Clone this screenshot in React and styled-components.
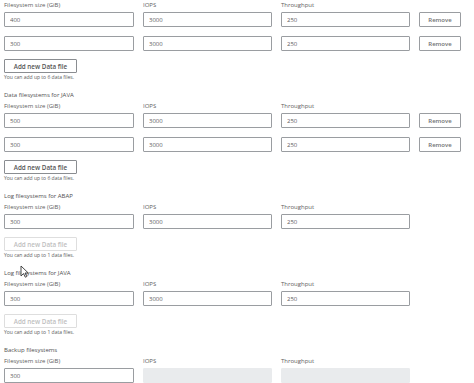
import React from 'react';
import styled, { createGlobalStyle } from 'styled-components';

const GlobalStyle = createGlobalStyle`
  body {
    margin: 0;
    background: #ffffff;
    font-family: "Open Sans", "Liberation Sans", sans-serif;
  }
`;

const Page = styled.div`
  position: relative;
  padding: 1px 0 0 4px;
  width: 474px;
  height: 383px;
  box-sizing: border-box;
  overflow: hidden;
`;

const Section = styled.section`
  display: flex;
  flex-direction: column;
  margin-bottom: 10px;
`;

const Title = styled.div`
  font-size: 6px;
  line-height: 8px;
  color: #505050;
  margin-bottom: 3px;
`;

const Columns = styled.div`
  display: grid;
  grid-template-columns: 130px 129px 129px 42px;
  column-gap: 9px;
  row-gap: 9px;
`;

const HeaderRow = styled(Columns)`
  margin-bottom: 3px;
`;

const Label = styled.div`
  font-size: 6px;
  line-height: 8px;
  color: #606060;
`;

const Field = styled.input`
  box-sizing: border-box;
  width: 100%;
  height: 15px;
  margin: 0;
  padding: 0 5px;
  font-family: "Open Sans", "Liberation Sans", sans-serif;
  font-size: 6px;
  color: #606060;
  background: ${({ disabled }) => (disabled ? '#e9ebed' : '#fff')};
  border: 1px solid ${({ disabled }) => (disabled ? '#e9ebed' : '#9a9da1')};
  border-radius: 1px;
  outline: none;
`;

const RemoveButton = styled.button`
  box-sizing: border-box;
  height: 15px;
  margin: 0;
  padding: 0;
  font-family: "Open Sans", "Liberation Sans", sans-serif;
  font-size: 6px;
  font-weight: 600;
  color: #707070;
  background: #fff;
  border: 1px solid #9a9da1;
  border-radius: 1px;
`;

const AddButton = styled.button`
  box-sizing: border-box;
  align-self: flex-start;
  width: 73px;
  height: 14px;
  margin: 8px 0 0;
  padding: 0;
  font-family: "Open Sans", "Liberation Sans", sans-serif;
  font-size: 6.3px;
  font-weight: 600;
  color: ${({ disabled }) => (disabled ? '#c0c0c0' : '#555')};
  background: #fff;
  border: 1px solid ${({ disabled }) => (disabled ? '#dedede' : '#8a8d91')};
  border-radius: 1px;
`;

const Helper = styled.div`
  font-size: 5px;
  line-height: 8px;
  color: #5a5a5a;
`;

const Cursor = styled.svg`
  position: absolute;
  left: 20px;
  top: 265px;
`;

const sections = [
  { title: null, rows: [['400', '3000', '250'], ['300', '3000', '250']], remove: true, limit: 6 },
  { title: 'Data filesystems for JAVA', rows: [['500', '3000', '250'], ['300', '3000', '250']], remove: true, limit: 6 },
  { title: 'Log filesystems for ABAP', rows: [['300', '3000', '250']], limit: 1, disabledAdd: true },
  { title: 'Log filesystems for JAVA', rows: [['300', '3000', '250']], limit: 1, disabledAdd: true },
  { title: 'Backup filesystems', rows: [['300', null, null]], noAdd: true },
];

const FsSection = ({ title, rows, remove, limit, disabledAdd, noAdd }) => (
  <Section>
    {title && <Title>{title}</Title>}
    <HeaderRow>
      <Label>Filesystem size (GiB)</Label>
      <Label>IOPS</Label>
      <Label>Throughput</Label>
    </HeaderRow>
    <Columns>
      {rows.map((row, i) => (
        <React.Fragment key={i}>
          {row.map((v, j) =>
            v === null ? (
              <Field key={j} disabled readOnly value="" />
            ) : (
              <Field key={j} readOnly value={v} />
            )
          )}
          {remove ? <RemoveButton>Remove</RemoveButton> : <span />}
        </React.Fragment>
      ))}
    </Columns>
    {!noAdd && (
      <>
        <AddButton disabled={disabledAdd}>Add new Data file</AddButton>
        <Helper>You can add up to {limit} data files.</Helper>
      </>
    )}
  </Section>
);

export default function App() {
  return (
    <>
      <GlobalStyle />
      <Page>
        {sections.map((s, i) => (
          <FsSection key={i} {...s} />
        ))}
        <Cursor width="9" height="13" viewBox="0 0 9 13">
          <path d="M1 1 L1 11 L3.5 8.6 L5.3 12.2 L6.8 11.5 L5 8 L8.3 8 Z" fill="#fff" stroke="#333" strokeWidth="0.9" strokeLinejoin="round" />
        </Cursor>
      </Page>
    </>
  );
}
